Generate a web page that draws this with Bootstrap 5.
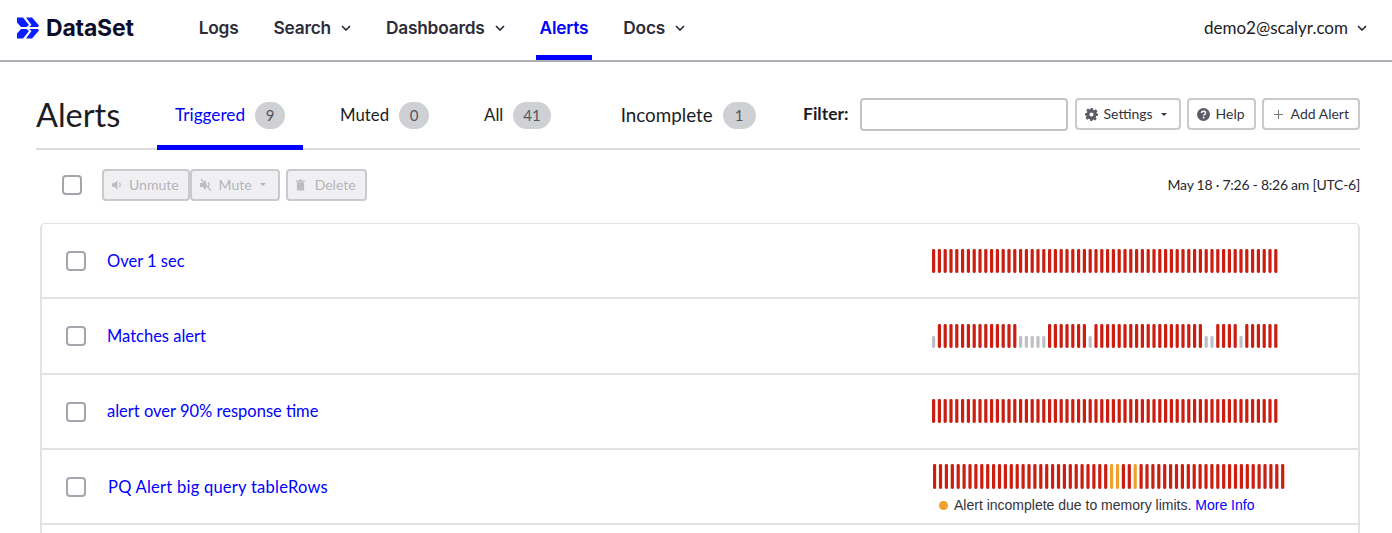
<!DOCTYPE html>
<html lang="en">
<head>
    <meta charset="UTF-8">
    <meta name="viewport" content="width=device-width, initial-scale=1.0">
    <title>Alerts</title>
    <link href="https://cdn.jsdelivr.net/npm/bootstrap@5.3.0/dist/css/bootstrap.min.css" rel="stylesheet">
    <style>
        body {
            font-family: Lato, "Liberation Sans", sans-serif;
            color: #1c1c24;
            height: 533px;
            overflow: hidden;
        }
        .top-bar {
            height: 62px;
            border-bottom: 2px solid #aeaeb6;
            padding: 0 17px;
        }
        .brand-name {
            font-family: Inter, sans-serif;
            font-weight: 700;
            font-size: 23px;
            letter-spacing: -0.2px;
            color: #0d0d2b;
            margin-left: 7px;
        }
        .top-link {
            font-family: Inter, sans-serif;
            font-weight: 600;
            font-size: 17.3px;
            letter-spacing: -0.2px;
            color: #2c2c38;
            height: 60px;
            padding: 0 4px 5px;
            display: flex;
            align-items: center;
            gap: 10px;
            text-decoration: none;
        }
        .top-link.on {
            color: #0000ff;
            box-shadow: inset 0 -5px 0 #0000ff;
        }
        .top-links { margin-left: 61px; gap: 27px; }
        .user-link { font-size: 17px; color: #1c1c24; gap: 9px; margin-right: 8px; padding-bottom: 5px; }
        .head-row {
            margin: 0 32px 0 36px;
            height: 88px;
            border-bottom: 2px solid #dcdce0;
            padding-top: 18px;
        }
        .page-title {
            font-size: 32.5px;
            font-weight: 400;
            margin: 0 38px 0 0;
            line-height: 66px;
            height: 66px;
            width: 83px;
        }
        .tab-strip { gap: 19px; }
        .tab-item {
            height: 66px;
            font-size: 16.8px;
            color: #1c1c24;
            text-decoration: none;
            display: flex;
            align-items: center;
            gap: 10px;
            padding: 0 18px;
        }
        .tab-item.on {
            font-size: 17.2px;
            color: #0000ff;
            box-shadow: 0 2px 0 #0000ff, inset 0 -3px 0 #0000ff;
        }
        .tab-item.wide { font-size: 18.8px; margin-left: 15px; }
        .tab-count {
            background: #cfd0d4;
            color: #55555f;
            font-size: 15px;
            border-radius: 14px;
            height: 27px;
            min-width: 30px;
            padding: 0 10px;
            display: flex;
            align-items: center;
            justify-content: center;
        }
        .tab-item.wide .tab-count { min-width: 33px; }
        .filter-group { height: 68px; gap: 6px; }
        .filter-label { font-weight: 700; font-size: 17.5px; margin-right: 5px; }
        .filter-box {
            width: 208px;
            height: 33px;
            border: 2px solid #c2c2c8;
            border-radius: 4px;
            margin-right: 1px;
        }
        .tool-btn {
            height: 32px;
            border: 2px solid #c9c9ce;
            border-radius: 4px;
            background: #fff;
            color: #33333d;
            font-size: 14px;
            padding: 0 9px 0 8px;
            display: flex;
            align-items: center;
            gap: 6px;
            line-height: 1;
        }
        .tool-btn.off { background: #f0f0f2; color: #b3b3b9; }
        .tool-btn.set-apart { margin-left: 6px; }
        .tool-btn svg { flex: none; }
        .plus-mark { margin: 0 2px; }
        .caret-mark {
            width: 0;
            height: 0;
            border-left: 3px solid transparent;
            border-right: 3px solid transparent;
            border-top: 3px solid currentColor;
            margin: 0 3px 0 2px;
        }
        .action-row { margin: 18px 32px 0 62px; height: 33px; }
        .action-row .tick-box { margin-right: 20px; }
        .tick-box {
            width: 20px;
            height: 20px;
            border: 2px solid #a5a5ad;
            border-radius: 4px;
            background: #fff;
            flex: none;
        }
        .time-range { font-size: 14px; letter-spacing: -0.25px; color: #26262e; }
        .alert-list {
            margin: 22px 32px 0 40px;
            border: solid #e2e2e6;
            border-width: 1px 2px 0;
            border-radius: 5px 5px 0 0;
        }
        .alert-row {
            height: 75.3px;
            border-bottom: 2px solid #e2e2e6;
            padding: 1px 0 0 24px;
            position: relative;
        }
        .alert-row.cut-off { height: 8px; border: 0; padding: 0; }
        .alert-name {
            font-size: 16.5px;
            color: #0000ff;
            text-decoration: none;
            margin-left: 21px;
        }
        .alert-name.stretched { margin-left: 22px; letter-spacing: 0.25px; }
        .bar-area { position: absolute; left: 890px; top: 24.8px; }
        .bar-area.shifted { left: 891px; top: 14.5px; }
        .bar-line { display: block; }
        .memory-note {
            font-family: "Liberation Sans", Arial, sans-serif;
            font-size: 14px;
            color: #33333b;
            margin: 8px 0 0 6px;
            display: flex;
            align-items: center;
            line-height: 16px;
        }
        .memory-note a { color: #0000ff; text-decoration: none; margin-left: 4px; }
        .note-dot { width: 9px; height: 9px; border-radius: 50%; background: #f0a02c; margin-right: 6px; }
    </style>
</head>
<body>
    <nav class="top-bar d-flex align-items-center">
        <a class="d-flex align-items-center text-decoration-none pb-1" href="#">
            <svg width="22" height="22" viewBox="0 0 22 21">
                <path fill="#0a1fff" d="M0 0h6l6 7.500-2.500 2H4L0 5zM9 0h6l7 8-1 1.500h-9l2.500-2zM0 16l4-4.500h5.500l2.500 2L6 21H0zM14.500 13.500l-2.500-2h9l1 1.500-7 8H9z"/>
            </svg>
            <span class="brand-name">DataSet</span>
        </a>
        <div class="top-links d-flex">
            <a class="top-link" href="#">Logs</a>
            <a class="top-link" href="#">Search <svg width="10" height="6" viewBox="0 0 10 6"><path d="M1 1l4 4 4-4" fill="none" stroke="#2c2c38" stroke-width="1.700"/></svg></a>
            <a class="top-link" href="#">Dashboards <svg width="10" height="6" viewBox="0 0 10 6"><path d="M1 1l4 4 4-4" fill="none" stroke="#2c2c38" stroke-width="1.700"/></svg></a>
            <a class="top-link on" href="#">Alerts</a>
            <a class="top-link" href="#">Docs <svg width="10" height="6" viewBox="0 0 10 6"><path d="M1 1l4 4 4-4" fill="none" stroke="#2c2c38" stroke-width="1.700"/></svg></a>
        </div>
        <a class="ms-auto d-flex align-items-center text-decoration-none user-link" href="#">demo2@scalyr.com <svg width="10" height="6" viewBox="0 0 10 6"><path d="M1 1l4 4 4-4" fill="none" stroke="#2c2c38" stroke-width="1.700"/></svg></a>
    </nav>

    <div class="head-row d-flex align-items-end">
        <h1 class="page-title">Alerts</h1>
        <div class="tab-strip d-flex">
            <a class="tab-item on" href="#">Triggered <span class="tab-count">9</span></a>
            <a class="tab-item" href="#">Muted <span class="tab-count">0</span></a>
            <a class="tab-item" href="#">All <span class="tab-count">41</span></a>
            <a class="tab-item wide" href="#">Incomplete <span class="tab-count">1</span></a>
        </div>
        <div class="filter-group ms-auto d-flex align-items-center">
            <span class="filter-label">Filter:</span>
            <div class="filter-box"></div>
            <button class="tool-btn" type="button">
                <svg width="13" height="13" viewBox="0 0 16 16"><path fill="#5d5d68" fill-rule="evenodd" d="M6.500 0h3l.4 2.200 1.500.6 1.900-1.300 2.100 2.100-1.300 1.900.6 1.500L16 6.500v3l-2.200.4-.6 1.500 1.300 1.900-2.100 2.100-1.900-1.300-1.500.6L9.500 16h-3l-.4-2.200-1.500-.6-1.900 1.300-2.100-2.100 1.300-1.900-.6-1.500L0 9.500v-3l2.200-.4.600-1.500L1.500 2.700l2.100-2.100 1.900 1.300 1.500-.6zM8 5.500a2.500 2.500 0 1 0 0 5 2.500 2.500 0 0 0 0-5z"/></svg>
                Settings <span class="caret-mark"></span>
            </button>
            <button class="tool-btn" type="button">
                <svg width="13" height="13" viewBox="0 0 16 16"><circle cx="8" cy="8" r="8" fill="#5d5d68"/><path d="M5.500 6.200C5.500 4.800 6.600 4 8 4s2.500.8 2.500 2.100c0 1.900-2.300 1.800-2.300 3.400" fill="none" stroke="#fff" stroke-width="1.800"/><rect x="7.200" y="10.800" width="2" height="2" fill="#fff"/></svg>
                Help
            </button>
            <button class="tool-btn" type="button">
                <svg class="plus-mark" width="9" height="9" viewBox="0 0 9 9"><path d="M4.500 0v9M0 4.500h9" stroke="#77777f" stroke-width="1"/></svg>
                Add Alert
            </button>
        </div>
    </div>

    <div class="action-row d-flex align-items-center">
        <div class="tick-box"></div>
        <button class="tool-btn off" type="button">
            <svg width="11" height="12" viewBox="0 0 12 12"><path fill="#bcbcc2" d="M0 4h2.500L6 1v10L2.500 8H0z"/><path d="M8 3.500a3.500 3.500 0 0 1 0 5" fill="none" stroke="#bcbcc2" stroke-width="1.300"/></svg>
            Unmute
        </button>
        <button class="tool-btn off" type="button">
            <svg width="13" height="12" viewBox="0 0 13 12"><path fill="#bcbcc2" d="M0 4h2.500L6 1v10L2.500 8H0z"/><path d="M8 3.500a3.500 3.500 0 0 1 0 5M1 0l10 12" fill="none" stroke="#bcbcc2" stroke-width="1.300"/></svg>
            Mute <span class="caret-mark"></span>
        </button>
        <button class="tool-btn off set-apart" type="button">
            <svg width="9" height="12" viewBox="0 0 10 12"><path fill="#bcbcc2" d="M1 3h8v9H1zM0 1h3.500V0h3v1H10v1.300H0z"/></svg>
            <span class="ms-1">Delete</span>
        </button>
        <span class="ms-auto time-range">May 18 · 7:26 - 8:26 am [UTC-6]</span>
    </div>

    <div class="alert-list">
        <div class="alert-row d-flex align-items-center">
            <div class="tick-box"></div>
            <a class="alert-name" href="#">Over 1 sec</a>
            <div class="bar-area"><svg class="bar-line" data-runs="r60" data-pitch="5.8" data-tall="24"></svg></div>
        </div>
        <div class="alert-row d-flex align-items-center">
            <div class="tick-box"></div>
            <a class="alert-name" href="#">Matches alert</a>
            <div class="bar-area"><svg class="bar-line" data-runs="i1 r14 i5 r7 i1 r19 i2 r4 i1 r6" data-pitch="5.8" data-tall="24"></svg></div>
        </div>
        <div class="alert-row d-flex align-items-center">
            <div class="tick-box"></div>
            <a class="alert-name" href="#">alert over 90% response time</a>
            <div class="bar-area"><svg class="bar-line" data-runs="r60" data-pitch="5.8" data-tall="24"></svg></div>
        </div>
        <div class="alert-row d-flex align-items-center">
            <div class="tick-box"></div>
            <a class="alert-name stretched" href="#">PQ Alert big query tableRows</a>
            <div class="bar-area shifted">
                <svg class="bar-line" data-runs="r30 w2 r2 w1 r25" data-pitch="5.9" data-tall="25"></svg>
                <div class="memory-note"><span class="note-dot"></span>Alert incomplete due to memory limits. <a href="#">More Info</a></div>
            </div>
        </div>
        <div class="alert-row cut-off"></div>
    </div>

    <script>
        const fills = { r: '#cb1d10', i: '#bfc0c6', w: '#f0a02c' };
        document.querySelectorAll('.bar-line').forEach(function(line) {
            const pitch = parseFloat(line.dataset.pitch);
            const tall = parseInt(line.dataset.tall);
            let html = '';
            let x = 0;
            for (const run of line.dataset.runs.split(' ')) {
                const count = parseInt(run.slice(1));
                for (let n = 0; n < count; n++) {
                    const h = run[0] === 'i' ? 12 : tall;
                    html += `<rect x="${x.toFixed(2)}" y="${tall - h}" width="3.2" height="${h}" rx="1.4" fill="${fills[run[0]]}"/>`;
                    x += pitch;
                }
            }
            line.setAttribute('width', Math.ceil(x));
            line.setAttribute('height', tall);
            line.innerHTML = html;
        });
    </script>
    <script src="https://cdn.jsdelivr.net/npm/bootstrap@5.3.0/dist/js/bootstrap.bundle.min.js"></script>
</body>
</html>
